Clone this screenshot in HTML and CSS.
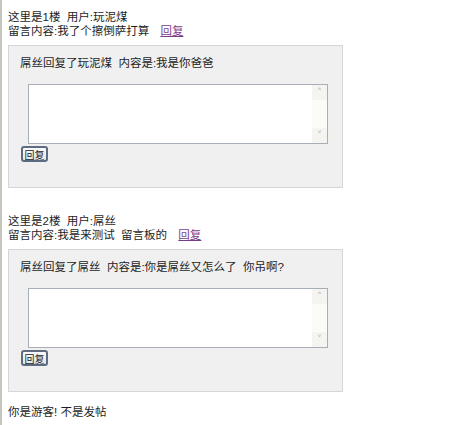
FILE: index.html
```html
<!DOCTYPE html>
<html lang="zh">
<head>
<meta charset="utf-8">
<title>留言板</title>
<link rel="stylesheet" href="styles.css">
</head>
<body>
<div class="page">
  <div class="floor">
    <p class="meta">这里是1楼&nbsp; 用户:玩泥煤<br>留言内容:我了个擦倒萨打算 <a class="reply-link" href="#r1">回复</a></p>
    <div class="reply-box">
      <p class="reply-text">屌丝回复了玩泥煤&nbsp; 内容是:我是你爸爸</p>
      <form class="reply-form">
        <div class="ta-wrap">
          <textarea class="ta"></textarea>
          <span class="sb"><span class="sb-btn">&#x2c4;</span><span class="sb-btn">&#x2c5;</span></span>
        </div>
        <button class="btn" type="button">回复</button>
      </form>
    </div>
  </div>
  <div class="floor">
    <p class="meta">这里是2楼&nbsp; 用户:屌丝<br>留言内容:我是来测试&nbsp; 留言板的 <a class="reply-link" href="#r2">回复</a></p>
    <div class="reply-box">
      <p class="reply-text">屌丝回复了屌丝&nbsp; 内容是:你是屌丝又怎么了&nbsp; 你吊啊?</p>
      <form class="reply-form">
        <div class="ta-wrap">
          <textarea class="ta"></textarea>
          <span class="sb"><span class="sb-btn">&#x2c4;</span><span class="sb-btn">&#x2c5;</span></span>
        </div>
        <button class="btn" type="button">回复</button>
      </form>
    </div>
  </div>
  <p class="guest">你是游客! 不是发帖</p>
</div>
</body>
</html>
```

FILE: styles.css
```css
html, body {
  margin: 0;
  padding: 0;
  background: #fff;
}
body {
  font-family: "Liberation Sans", "Noto Sans CJK SC", sans-serif;
  font-size: 11.5px;
  line-height: 14px;
  color: #1e1e1e;
}
.page {
  border-left: 2px solid #c6c6be;
  min-height: 425px;
  box-sizing: border-box;
  padding: 10px 0 0 6px;
}
.floor {
  margin-bottom: 26px;
}
.meta {
  margin: 0;
}
.reply-link {
  color: #7a3d8a;
  text-decoration: underline;
  margin-left: 8px;
}
.reply-box {
  margin-top: 7px;
  width: 335px;
  box-sizing: border-box;
  background: #f0f0f0;
  border: 1px solid #d6d6d6;
  padding: 10px 11px 25px 11px;
}
.reply-text {
  margin: 0;
}
.reply-form {
  margin: 14px 0 0 0;
  display: flex;
  flex-direction: column;
  align-items: flex-start;
}
.ta-wrap {
  position: relative;
  margin-left: 8px;
  width: 300px;
  height: 60px;
}
.ta {
  display: block;
  width: 300px;
  height: 60px;
  box-sizing: border-box;
  margin: 0;
  border: 1px solid #a8aeb6;
  background: #fff;
  resize: none;
  overflow: hidden;
  padding: 2px;
  font: inherit;
}
.sb {
  position: absolute;
  top: 1px;
  right: 1px;
  bottom: 1px;
  width: 15px;
  background: #fbfbf7;
  display: flex;
  flex-direction: column;
  justify-content: space-between;
}
.sb-btn {
  height: 15px;
  font-family: "DejaVu Sans", sans-serif;
  font-size: 10px;
  line-height: 15px;
  text-align: center;
  color: #bdbdbd;
  background: #f4f4f0;
}
.btn {
  margin: 2px 0 0 1px;
  width: 27px;
  height: 16px;
  padding: 0;
  box-sizing: border-box;
  border: 2px solid #5d6c80;
  border-radius: 3px;
  background: linear-gradient(#f8f9fb, #e2e7ed);
  font-family: "Noto Sans CJK SC", sans-serif;
  font-size: 10px;
  line-height: 11px;
  color: #222;
}
.guest {
  margin: 0;
  margin-top: -13px;
}
```
